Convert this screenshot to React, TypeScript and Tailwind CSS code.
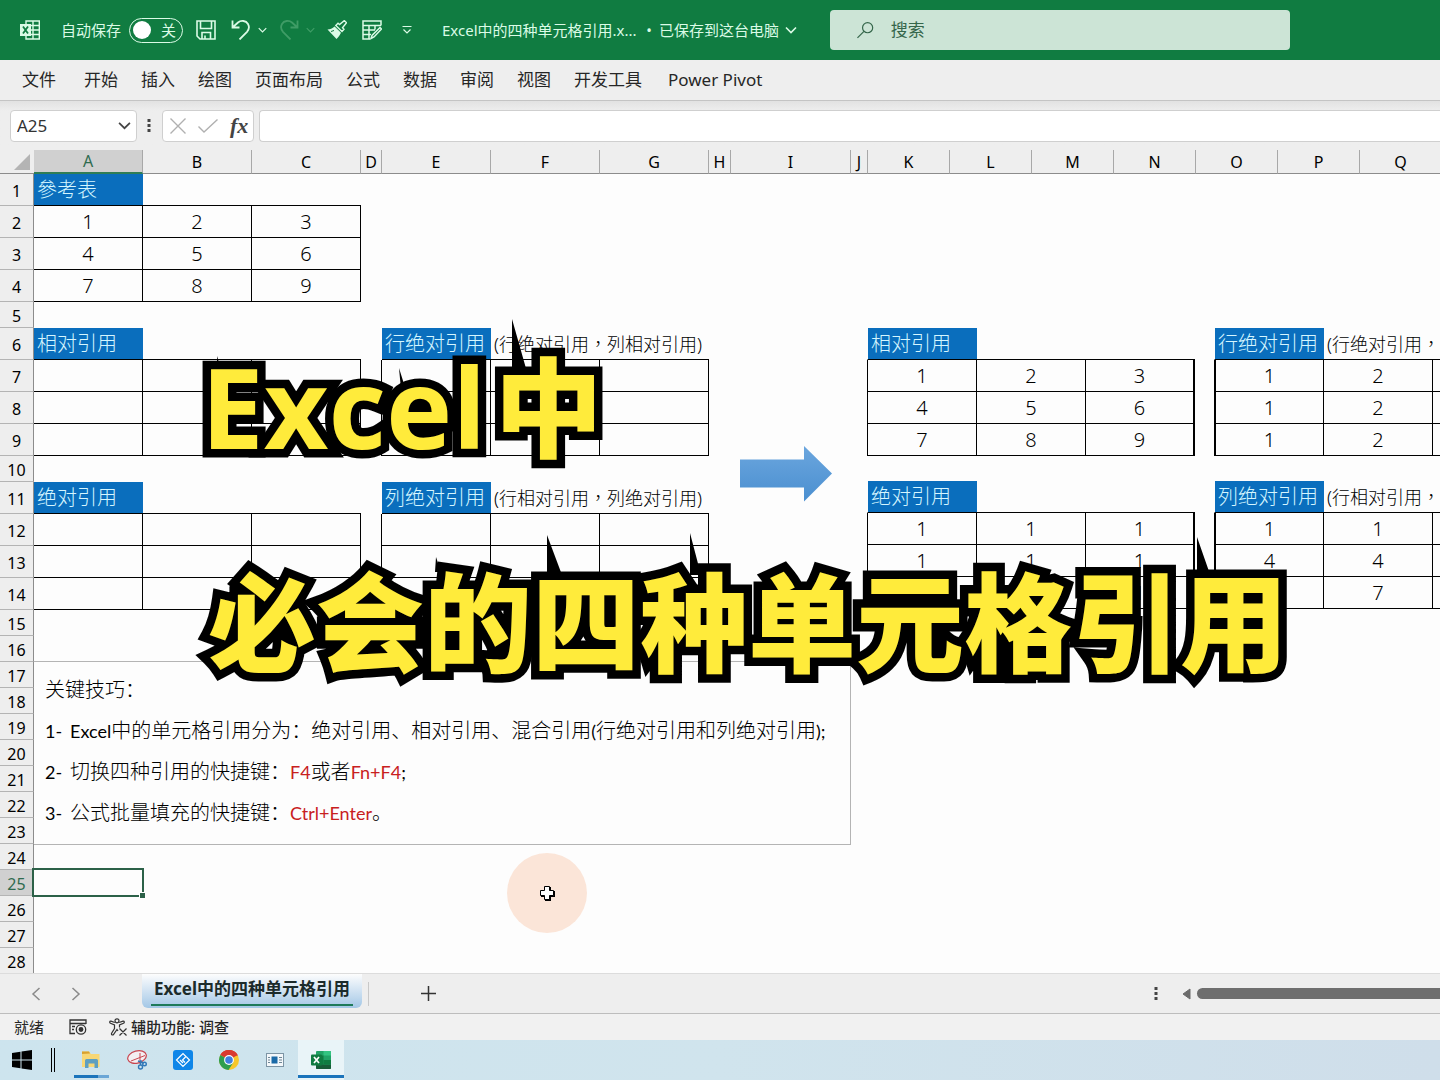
import React from "react";

const SANS = "font-['Noto_Sans','Noto_Sans_CJK_SC',sans-serif]";
const TC = "font-['Noto_Sans','Noto_Sans_CJK_TC',sans-serif]";

/* ---------- icons ---------- */

type IconProps = { className?: string };

function Chevron({ className = "" }: IconProps) {
  return (
    <svg viewBox="0 0 12 8" fill="none" stroke="currentColor" className={className} aria-hidden="true">
      <path d="M1 1.5 6 6.5 11 1.5" strokeWidth="1.6" />
    </svg>
  );
}

function ExcelMono() {
  return (
    <svg viewBox="0 0 20 20" className="size-5" aria-hidden="true">
      <g fill="none" stroke="#dbfbe6" strokeWidth="1.4">
        <path d="M6 1H19.3V19H6Z M13 1V19 M6 5.5H19 M6 10H19 M6 14.5H19" />
      </g>
      <rect x="0" y="4" width="11" height="12" fill="#dbfbe6" />
      <path d="M3 6.5 8 13.5 M8 6.5 3 13.5" stroke="#107c41" strokeWidth="1.8" />
    </svg>
  );
}

function SaveIcon() {
  return (
    <svg viewBox="0 0 20 20" className="size-5" fill="none" stroke="currentColor" strokeWidth="1.6" aria-hidden="true">
      <path d="M1 1H19V19H4L1 16Z" />
      <path d="M4.5 1V8.5H15.500V1 M6 19V12.500H14.500V19 M9 19V15.500" />
    </svg>
  );
}

function UndoIcon({ className = "" }: IconProps) {
  return (
    <svg viewBox="0 0 20 20" className={className} fill="none" stroke="currentColor" strokeWidth="1.8" aria-hidden="true">
      <path d="M1.500 0.500V7.500H8.500 M1.500 7.500 7 2.500C10 0 15 0.500 17 4C18.700 7 18 9.500 16 11.800L8.500 19.500" />
    </svg>
  );
}

function BrushIcon() {
  return (
    <svg viewBox="0 0 20 20" className="size-5" aria-hidden="true">
      <path d="M19.500 2.800 17.300 0.600 12.500 4.600 11 3.200 8.800 5.400 15 11.500 17 9.300 15.500 7.700Z" fill="none" stroke="currentColor" strokeWidth="1.4" />
      <path d="M7.600 6.500C5.500 8.500 3 9.300 0.500 9.500L9.500 19C11.500 17 13 15 14 12.800Z" fill="currentColor" />
      <path d="M4 11.500 7 10.500" stroke="#107c41" strokeWidth="1" />
    </svg>
  );
}

function TableEditIcon() {
  return (
    <svg viewBox="0 0 20 20" className="size-5" fill="none" stroke="currentColor" strokeWidth="1.5" aria-hidden="true">
      <path d="M8 19H1V1H19V5.500 M1 5.500H19 M1 10H13 M1 14.500H9 M7 5.500V19 M13 5.500V9.500" />
      <path d="M18 7.500 19.500 9 12 17 9 18.500 10 15.500Z" />
    </svg>
  );
}

function CustomizeIcon() {
  return (
    <svg viewBox="0 0 10 10" className="size-[10px]" fill="none" stroke="currentColor" strokeWidth="1.200" aria-hidden="true">
      <path d="M0.500 1.500H9.500 M1.500 4.500 5 8 8.500 4.500" />
    </svg>
  );
}

function SearchIcon() {
  return (
    <svg viewBox="0 0 18 18" className="size-[18px]" fill="none" stroke="currentColor" strokeWidth="1.300" aria-hidden="true">
      <circle cx="11.500" cy="6.500" r="5.500" />
      <path d="M7.500 10.500 0.500 17.500" />
    </svg>
  );
}

function KebabIcon() {
  return (
    <svg viewBox="0 0 4 14" className="h-[14px] w-1" fill="#444" aria-hidden="true">
      <rect x="0.500" y="0" width="3" height="3" />
      <rect x="0.500" y="5" width="3" height="3" />
      <rect x="0.500" y="10" width="3" height="3" />
    </svg>
  );
}

/* ---------- title bar ---------- */

function TitleBar() {
  return (
    <header className="flex h-[60px] shrink-0 items-center bg-[#107c41] pl-5 text-[15px] text-[#dbfbe6]">
      <ExcelMono />
      <label className="ml-[21px] flex items-center gap-2">
        <span className="whitespace-nowrap">自动保存</span>
        <input type="checkbox" className="peer sr-only" />
        <span className="flex h-[25px] w-[54px] items-center justify-between rounded-full border border-[#dbfbe6] pr-[6px] pl-[3px]">
          <span className="size-[18px] rounded-full bg-white" />
          <span>关</span>
        </span>
      </label>
      <button type="button" aria-label="保存" className="ml-[13px]"><SaveIcon /></button>
      <button type="button" aria-label="撤消" className="ml-[15px]"><UndoIcon className="size-5" /></button>
      <button type="button" aria-label="撤消选项" className="ml-[7px]"><Chevron className="h-[6px] w-[9px]" /></button>
      <button type="button" aria-label="恢复" className="ml-3 text-[#3f9c66]"><UndoIcon className="size-5 -scale-x-100" /></button>
      <button type="button" aria-label="恢复选项" className="ml-[7px] text-[#3f9c66]"><Chevron className="h-[6px] w-[9px]" /></button>
      <button type="button" aria-label="格式刷" className="ml-3"><BrushIcon /></button>
      <button type="button" aria-label="编辑表格" className="ml-[15px]"><TableEditIcon /></button>
      <button type="button" aria-label="自定义快速访问工具栏" className="ml-5"><CustomizeIcon /></button>
      <button type="button" className="ml-[30px] flex items-center whitespace-nowrap">
        <span className="w-[197px] text-left">Excel中的四种单元格引用.x...</span>
        <span className="w-5 text-center">•</span>
        <span>已保存到这台电脑</span>
        <Chevron className="ml-[6px] h-2 w-3" />
      </button>
      <label className="ml-[33px] flex h-10 w-[460px] shrink-0 items-center gap-[17px] rounded bg-[#cce4d6] pl-[27px] text-[#35664b]">
        <SearchIcon />
        <input aria-label="搜索" placeholder="搜索" className="w-full bg-transparent text-[17px] outline-none placeholder:text-[#35664b]" />
      </label>
    </header>
  );
}

const MENU = ["开始", "插入", "绘图", "页面布局", "公式", "数据", "审阅", "视图", "开发工具"];

function Ribbon() {
  return (
    <nav className="flex h-10 shrink-0 items-center gap-[23px] bg-[#eeeeee] pl-[22px] text-[17px] whitespace-nowrap text-[#262626]">
      <button type="button" className="mr-[5px]">文件</button>
      {MENU.map((m) => (
        <button type="button" key={m}>{m}</button>
      ))}
      <button type="button" className="ml-[3px]">Power Pivot</button>
    </nav>
  );
}

function FormulaBar() {
  return (
    <div className="flex h-[50px] shrink-0 items-center border-t border-[#c4c4c4] bg-linear-to-b from-[#e2e2e2] to-[#eeeeee] to-20% pl-[10px]">
      <div className="flex h-8 w-[127px] items-center rounded border border-[#cfcfcf] bg-white pr-[5px] pl-[6px]">
        <input aria-label="名称框" defaultValue="A25" className="w-full min-w-0 bg-transparent text-[17px] text-[#333] outline-none" />
        <button type="button" aria-label="名称列表" className="text-[#444]"><Chevron className="h-[9px] w-[13px]" /></button>
      </div>
      <span className="ml-[10px]"><KebabIcon /></span>
      <div className="ml-[11px] flex h-8 w-[92px] items-center rounded border border-[#cfcfcf] bg-white pl-[7px]">
        <button type="button" aria-label="取消">
          <svg viewBox="0 0 16 16" className="size-4" stroke="#b0b0b0" strokeWidth="1.400" aria-hidden="true"><path d="M0.500 0.500 15.500 15.500 M15.500 0.500 0.500 15.500" /></svg>
        </button>
        <button type="button" aria-label="输入" className="ml-3">
          <svg viewBox="0 0 20 14" className="h-[14px] w-5" fill="none" stroke="#b0b0b0" strokeWidth="1.400" aria-hidden="true"><path d="M0.500 7.500 6 13 19.500 0.500" /></svg>
        </button>
        <button type="button" aria-label="插入函数" className="ml-3 font-['Liberation_Serif',serif] text-[22px] leading-6 font-bold text-[#444] italic">fx</button>
      </div>
      <input aria-label="编辑栏" className="ml-[5px] h-8 min-w-0 flex-1 rounded-l border border-r-0 border-[#cfcfcf] bg-white px-2 outline-none" />
    </div>
  );
}

/* ---------- sheet ---------- */

const COLS: [string, string][] = [
  ["A", "w-[109px]"], ["B", "w-[109px]"], ["C", "w-[109px]"], ["D", "w-[21px]"],
  ["E", "w-[109px]"], ["F", "w-[109px]"], ["G", "w-[109px]"], ["H", "w-[22px]"],
  ["I", "w-[120px]"], ["J", "w-[17px]"], ["K", "w-[82px]"], ["L", "w-[82px]"],
  ["M", "w-[82px]"], ["N", "w-[82px]"], ["O", "w-[82px]"], ["P", "w-[82px]"],
  ["Q", "w-[82px]"],
];

const TALL = [1, 2, 3, 4, 6, 7, 8, 9, 11, 12, 13, 14];
const TITLES: Record<string, string> = {
  A1: "參考表", A6: "相对引用", A11: "绝对引用", E6: "行绝对引用", E11: "列绝对引用",
};
const NOTES: Record<string, string> = {
  F6: "(行绝对引用，列相对引用)", F11: "(行相对引用，列绝对引用)",
};

const inRange = (n: number, a: number, b: number) => n >= a && n <= b;

function cellLines(c: number, r: number) {
  const body = inRange(r, 2, 4) || inRange(r, 7, 9) || inRange(r, 12, 14);
  const head = r === 1 || r === 6 || r === 11;
  const left = c <= 2;
  const right = inRange(c, 4, 6) && r > 5;
  const cls: string[] = [];
  if ((body || head) && (left || right)) cls.push("border-b");
  if (body && (left || right)) cls.push("border-r");
  if (body && c === 3 && r > 5) cls.push("border-r");
  return cls.join(" ");
}

function Cell({ c, r }: { c: number; r: number }) {
  const id = COLS[c][0] + r;
  const lines = cellLines(c, r);
  if (TITLES[id]) {
    return (
      <td className="border-b border-black bg-[#0a6ebd] p-0 pl-[3px] text-[20px] leading-6 font-light whitespace-nowrap text-[#d5f6ff]">
        {TITLES[id]}
      </td>
    );
  }
  if (NOTES[id]) {
    return (
      <td className={`border-black p-0 pl-[3px] text-[18px] leading-6 font-light whitespace-nowrap text-black ${lines}`}>{NOTES[id]}</td>
    );
  }
  const value = c < 3 && inRange(r, 2, 4) ? (r - 2) * 3 + c + 1 : null;
  return (
    <td className={`relative border-black p-0 text-center text-[20px] leading-6 font-light text-black ${lines}`}>
      {value}
      {id === "A25" && (
        <span className="absolute -top-[2px] -right-px -bottom-px -left-[2px] border-2 border-[#2c6148]">
          <span className="absolute -right-[3px] -bottom-[3px] size-[6px] border-t border-l border-white bg-[#2c6148]" />
        </span>
      )}
    </td>
  );
}

function Grid() {
  return (
    <table className={`w-0 table-fixed border-separate border-spacing-0 ${TC}`}>
      <colgroup>
        <col className="w-[34px]" />
        {COLS.map(([n, w]) => <col key={n} className={w} />)}
      </colgroup>
      <thead>
        <tr className="h-6">
          <th aria-label="全选" className="border-b border-[#8c8c8c] bg-[#eeeeee] p-0">
            <svg viewBox="0 0 16 16" className="ml-[14px] size-4" aria-hidden="true"><path d="M16 0V16H0Z" fill="#b4b4b4" /></svg>
          </th>
          {COLS.map(([n]) => (
            <th
              key={n}
              scope="col"
              className={`border-r border-r-[#a8a8a8] p-0 pt-px text-[16px] leading-[21px] font-normal ${
                n === "A" ? "border-b-2 border-b-[#2f7d55] bg-[#d0d0d0] text-[#2f6b4f]" : "border-b border-b-[#8c8c8c] bg-[#eeeeee] text-black"
              }`}
            >
              {n}
            </th>
          ))}
        </tr>
      </thead>
      <tbody>
        {Array.from({ length: 28 }, (_, i) => i + 1).map((r) => (
          <tr key={r} className={TALL.includes(r) ? "h-8" : "h-[26px]"}>
            <th
              scope="row"
              className={`border-r border-b border-r-[#8c8c8c] border-b-[#b4b4b4] p-0 pt-[2px] text-[16px] leading-[22px] font-normal ${
                r === 25 ? "bg-[#d0d0d0] text-[#2f6b4f]" : "bg-[#eeeeee] text-black"
              }`}
            >
              {r}
            </th>
            {COLS.map(([n], c) => <Cell key={n} c={c} r={r} />)}
          </tr>
        ))}
      </tbody>
    </table>
  );
}

type ResultProps = { title: string; note?: string; rows: number[][]; place: string };

function ResultTable({ title, note, rows, place }: ResultProps) {
  const edge = note ? "border-l-2" : "border-l";
  return (
    <table className={`absolute w-[328px] table-fixed border-separate border-spacing-0 text-[20px] leading-6 font-light text-black ${TC} ${place}`}>
      <colgroup>
        <col className="w-[110px]" />
        <col className="w-[109px]" />
        <col className="w-[109px]" />
      </colgroup>
      <thead>
        <tr className="h-8">
          <th className="border-b border-l border-b-black border-l-[#fdfdfd] bg-[#0a6ebd] p-0 pl-[3px] text-left font-light whitespace-nowrap text-[#d5f6ff]">{title}</th>
          <th className="border-b border-black p-0 pl-[3px] text-left text-[18px] font-light whitespace-nowrap">{note}</th>
          <th className="border-b border-black p-0" />
        </tr>
      </thead>
      <tbody>
        {rows.map((row, i) => (
          <tr key={i} className="h-8">
            {row.map((v, j) => (
              <td key={j} className={`border-b border-black p-0 text-center ${j === 0 ? `border-r ${edge}` : j === 2 ? "border-r-2" : "border-r"}`}>{v}</td>
            ))}
          </tr>
        ))}
      </tbody>
    </table>
  );
}

function NotesBox() {
  const line = "h-[41px]";
  const latin = "font-['Lato',sans-serif] text-[18px] font-normal";
  const key = "font-['Lato',sans-serif] text-[18px] font-normal text-[#c8201e]";
  const num = "inline-block w-[25px] font-['Lato',sans-serif] text-[18px] font-normal";
  return (
    <section className="absolute top-[511px] left-[34px] h-[184px] w-[817px] border border-l-0 border-[#b4b4b4] bg-[#fdfdfd] pt-[7px] pl-[11px] font-['Noto_Sans_CJK_SC',sans-serif] text-[20px] leading-10 font-light whitespace-nowrap text-black">
      <p className={line}>关键技巧：</p>
      <p className={line}><span className={num}>1-</span><span className={latin}>Excel</span>中的单元格引用分为：绝对引用、相对引用、混合引用<span className={latin}>(</span>行绝对引用和列绝对引用<span className={latin}>);</span></p>
      <p className={line}><span className={num}>2-</span>切换四种引用的快捷键：<span className={key}>F4</span>或者<span className={key}>Fn+F4</span><span className={latin}>;</span></p>
      <p className={line}><span className={num}>3-</span>公式批量填充的快捷键：<span className={key}>Ctrl+Enter</span>。</p>
    </section>
  );
}

function Caption() {
  const look = "absolute font-black whitespace-nowrap text-[#ffeb3b] [paint-order:stroke_fill] [-webkit-text-stroke:17px_#000]";
  return (
    <div className="pointer-events-none font-['Noto_Sans_CJK_SC',sans-serif] text-[108px] leading-[120px]">
      <svg viewBox="0 0 1240 400" className="absolute top-[150px] left-0 h-[400px] w-[1240px]" aria-hidden="true">
        <path d="M512 19 527 72H512Z M399 68 409 100H402Z M547 235 562 275H547Z M690 233 701 275H690Z M1197 237 1212 280H1197Z M217 56 220 66H217Z M436 257 441 272H435Z" fill="#000" />
      </svg>
      <p className={`top-[192px] left-[201px] ${look}`}>
        <span className="mr-2 font-['Open_Sans',sans-serif] text-[112px] font-bold">Excel</span>中
      </p>
      <p className={`top-[407px] left-[208px] ${look}`}>必会的四种单元格引用</p>
    </div>
  );
}

function Sheet() {
  return (
    <main className="relative min-h-0 flex-1 overflow-hidden bg-[#fdfdfd]">
      <Grid />
      <NotesBox />
      <svg viewBox="0 0 92 56" className="absolute top-[296px] left-[740px] h-14 w-[92px]" aria-hidden="true">
        <defs>
          <linearGradient id="arrow" x1="0" y1="0" x2="0" y2="1">
            <stop offset="0" stopColor="#6ba6de" />
            <stop offset="1" stopColor="#4a8fd0" />
          </linearGradient>
        </defs>
        <path d="M0 13.500H64V0L92 27.500 64 55.500V41.500H0Z" fill="url(#arrow)" />
      </svg>
      <ResultTable place="top-[178px] left-[867px]" title="相对引用" rows={[[1, 2, 3], [4, 5, 6], [7, 8, 9]]} />
      <ResultTable place="top-[178px] left-[1214px]" title="行绝对引用" note="(行绝对引用，列相对引用)" rows={[[1, 2, 3], [1, 2, 3], [1, 2, 3]]} />
      <ResultTable place="top-[331px] left-[867px]" title="绝对引用" rows={[[1, 1, 1], [1, 1, 1], [1, 1, 1]]} />
      <ResultTable place="top-[331px] left-[1214px]" title="列绝对引用" note="(行相对引用，列绝对引用)" rows={[[1, 1, 1], [4, 4, 4], [7, 7, 7]]} />
      <div className="absolute top-[703px] left-[507px] flex size-20 items-center justify-center rounded-full bg-[#fbe5d8]">
        <svg viewBox="0 0 16 16" className="size-4" aria-hidden="true">
          <path d="M6 2H12V6H16V12H12V16H6V12H2V6H6Z" fill="#000" />
          <path d="M5.500 1.500H10.500V5.500H14.500V10.500H10.500V14.500H5.500V10.500H1.500V5.500H5.500Z" fill="#fff" stroke="#000" />
        </svg>
      </div>
      <Caption />
    </main>
  );
}

/* ---------- bottom bars ---------- */

function TabBar() {
  return (
    <div className="flex h-10 shrink-0 items-center border-t border-[#dcdcdc] bg-[#eeeeee]">
      <button type="button" aria-label="上一张" className="ml-[31px] text-[#8a8a8a]">
        <svg viewBox="0 0 10 14" className="h-[14px] w-[10px]" fill="none" stroke="currentColor" strokeWidth="1.500"><path d="M8.500 1 2 7 8.500 13" /></svg>
      </button>
      <button type="button" aria-label="下一张" className="ml-[30px] text-[#8a8a8a]">
        <svg viewBox="0 0 10 14" className="h-[14px] w-[10px]" fill="none" stroke="currentColor" strokeWidth="1.500"><path d="M1.500 1 8 7 1.500 13" /></svg>
      </button>
      <button type="button" className="ml-[61px] h-[34px] w-[220px] self-start rounded-b-md bg-linear-to-b from-[#fdfdfd] to-[#a3c7e6] px-[9px] text-[17px] leading-6 font-bold whitespace-nowrap text-[#1c2b2b]">
        <span className="block border-b-2 border-[#1e7a5a] pb-[3px]">Excel中的四种单元格引用</span>
      </button>
      <span className="ml-[6px] h-6 w-px bg-[#c8c8c8]" />
      <button type="button" aria-label="新工作表" className="ml-[52px] text-[#333]">
        <svg viewBox="0 0 15 15" className="size-[15px]" stroke="currentColor" strokeWidth="1.500"><path d="M7.500 0V15 M0 7.500H15" /></svg>
      </button>
      <span className="flex-1" />
      <KebabIcon />
      <button type="button" aria-label="向左滚动" className="ml-6">
        <svg viewBox="0 0 9 12" className="h-3 w-[9px]"><path d="M8 1V11L1 6Z" fill="#6b6b6b" stroke="#6b6b6b" strokeLinejoin="round" /></svg>
      </button>
      <span className="ml-[6px] h-[11px] w-[243px] rounded-l-full bg-[#6e6e6e]" />
    </div>
  );
}

function StatusBar() {
  return (
    <div className="flex h-[27px] shrink-0 items-center border-t border-[#bdbdbd] bg-[#f1f1f1] pl-[14px] text-[15px] whitespace-nowrap text-[#262626]">
      <span>就绪</span>
      <button type="button" aria-label="宏录制" className="ml-[25px]">
        <svg viewBox="0 0 18 16" className="h-4 w-[18px]" fill="none" stroke="#333" strokeWidth="1.300" aria-hidden="true">
          <path d="M6 14.500H1V1H17V5 M1 4.500H17 M3 7.500H6 M3 10.500H5" />
          <circle cx="12" cy="10.500" r="4.700" />
          <circle cx="12" cy="10.500" r="1.800" fill="#333" />
        </svg>
      </button>
      <button type="button" className="ml-[22px] flex items-center gap-1 font-medium">
        <svg viewBox="0 0 18 18" className="size-[18px]" fill="none" stroke="#333" strokeWidth="1.200" aria-hidden="true">
          <circle cx="8" cy="2.800" r="2" />
          <path d="M5.800 4.500 2 3.200C0.500 3 0.300 4.600 1.500 5.200L5.500 7V10.500L2.500 15.500C2.200 17 3.800 17.500 4.600 16.300L8 11.500 9 13 M10.200 4.500 14 3.200C15.500 3 15.700 4.600 14.500 5.200L10.500 7V9.500 M10.500 10.500 17.500 17.500 M17.500 10.500 10.500 17.500" />
        </svg>
        <span>辅助功能: 调查</span>
      </button>
    </div>
  );
}

function TaskButton({ label, children, cls }: { label: string; children: React.ReactNode; cls?: string }) {
  return (
    <button type="button" aria-label={label} className={`relative flex h-10 w-[46px] items-center justify-center ${cls ?? ""}`}>
      {children}
    </button>
  );
}

function TaskBar() {
  return (
    <footer className="flex h-10 shrink-0 items-center bg-linear-to-r from-[#cde4ee] via-[#d0e4ed] to-[#cfdeea]">
      <button type="button" aria-label="开始菜单" className="ml-3">
        <svg viewBox="0 0 20 20" className="size-5" aria-hidden="true"><path d="M0 3 8.500 1.800V9.500H0Z M9.500 1.600 20 0V9.500H9.500Z M0 10.500H8.500V18.200L0 17Z M9.500 10.500H20V20L9.500 18.400Z" /></svg>
      </button>
      <span className="ml-[19px] h-6 w-1 border-x border-black" />
      <TaskButton label="文件资源管理器" cls="ml-[13px]">
        <svg viewBox="0 0 20 20" className="size-5" aria-hidden="true">
          <path d="M1 1.500H8L10 4H18.500V17H1Z" fill="#f8d775" />
          <path d="M1 1.500H8L9 3.500 1 4Z" fill="#d9a12f" />
          <path d="M4 18V10.500Q4 9 5.500 9H15.500Q17 9 17 10.500V18H13.500V13.500H7.500V18Z" fill="#5e9fc0" />
        </svg>
        <span className="absolute bottom-[2px] left-[6px] h-[3px] w-[35px] bg-linear-to-r from-[#1b74bb] from-70% to-[#6aa6d6] to-70%" />
      </TaskButton>
      <TaskButton label="截图工具">
        <svg viewBox="0 0 20 20" className="size-5" fill="none" aria-hidden="true">
          <ellipse cx="10" cy="7" rx="9.500" ry="6" transform="rotate(-15 10 7)" fill="#f4eef1" stroke="#c8454f" strokeWidth="1.200" />
          <path d="M4 11 18 5.500 M13 3V14" stroke="#c8454f" />
          <path d="M11 11 17 13M14 10 13.500 15" stroke="#3178b8" strokeWidth="1.400" />
          <circle cx="17.500" cy="14" r="1.800" stroke="#3178b8" strokeWidth="1.400" />
          <circle cx="13.500" cy="17" r="2" stroke="#3178b8" strokeWidth="1.400" />
        </svg>
      </TaskButton>
      <TaskButton label="协作工具">
        <svg viewBox="0 0 20 20" className="size-5" fill="none" aria-hidden="true">
          <rect width="20" height="20" rx="3" fill="#0f86e8" />
          <path d="M6.500 7 10 3.500 13 6.500 9.500 10 12 12.500 M7 6.500 3.500 10 10 16.500 16.500 10 13.500 7 M7 10 10 13" stroke="#fff" strokeWidth="1.200" />
        </svg>
      </TaskButton>
      <TaskButton label="Chrome">
        <svg viewBox="0 0 20 20" className="size-5" aria-hidden="true">
          <circle cx="10" cy="10" r="10" fill="#f7c72b" />
          <path d="M10 10 1.340 5A10 10 0 0 1 18.660 5Z" fill="#d93a30" />
          <path d="M10 10 1.340 5A10 10 0 0 0 9.500 20L14.300 12.500Z" fill="#2e9e4f" />
          <path d="M1.340 5 10 5.500H18.900A10 10 0 0 0 1.340 5Z" fill="#d93a30" />
          <circle cx="10" cy="10" r="4.900" fill="#fff" />
          <circle cx="10" cy="10" r="3.800" fill="#3f7fe0" />
        </svg>
      </TaskButton>
      <TaskButton label="窗口工具">
        <svg viewBox="0 0 18 14" className="h-[14px] w-[18px]" aria-hidden="true">
          <rect x="0.500" y="0.500" width="17" height="13" fill="#f4f8fb" stroke="#7d95a5" />
          <rect x="5.500" y="3.500" width="6" height="7" fill="#1c6ba8" />
          <path d="M2 4.500H4M2 7H4M2 9.500H4M13 4.500H16M13 7H16M13 9.500H16" stroke="#6f8796" />
        </svg>
      </TaskButton>
      <TaskButton label="Excel" cls="bg-[#e9f4f8]">
        <svg viewBox="0 0 20 20" className="size-5" aria-hidden="true">
          <rect x="5" y="1" width="15" height="18" rx="1" fill="#21a366" />
          <path d="M12.500 1H19Q20 1 20 2V5.500H12.500Z" fill="#33c481" />
          <rect x="5" y="5.500" width="7.500" height="9" fill="#107c41" />
          <path d="M5 14.500H20V18Q20 19 19 19H6Q5 19 5 18Z" fill="#185c37" />
          <rect x="12.500" y="10" width="7.500" height="4.500" fill="#107c41" />
          <rect x="0" y="4.500" width="11" height="11" rx="1" fill="#107c41" />
          <path d="M3 7 8 13 M8 7 3 13" stroke="#fff" strokeWidth="1.700" />
        </svg>
        <span className="absolute bottom-[2px] left-0 h-[3px] w-full bg-[#1b74bb]" />
      </TaskButton>
    </footer>
  );
}

export default function App() {
  return (
    <div className={`flex h-screen flex-col overflow-hidden ${SANS}`}>
      <TitleBar />
      <Ribbon />
      <FormulaBar />
      <Sheet />
      <TabBar />
      <StatusBar />
      <TaskBar />
    </div>
  );
}
